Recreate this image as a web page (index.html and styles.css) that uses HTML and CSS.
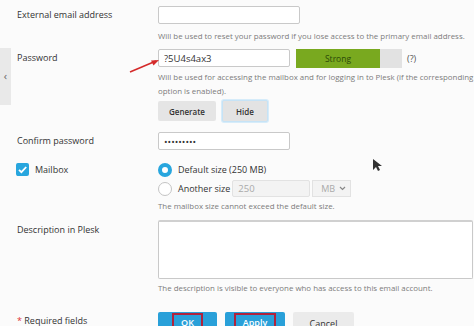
FILE: index.html
```html
<!DOCTYPE html>
<html lang="en">
<head>
  <meta charset="UTF-8">
  <title>Create Email Address</title>
  <link rel="stylesheet" href="styles.css">
</head>
<body>
  <div class="side-tab">&lsaquo;</div>

  <form class="form">
    <div class="row row-email">
      <div class="label">External email address</div>
      <div class="field">
        <input type="text" class="text wide">
        <div class="hint">Will be used to reset your password if you lose access to the primary email address.</div>
      </div>
    </div>

    <div class="row row-password">
      <div class="label">Password</div>
      <div class="field">
        <div class="inline">
          <input type="text" class="text" value="?5U4s4ax3">
          <div class="strength"><div class="strength-fill">Strong</div></div>
          <span class="help-mark">(?)</span>
        </div>
        <div class="hint">Will be used for accessing the mailbox and for logging in to Plesk (if the corresponding option is enabled).</div>
        <div class="inline buttons-small">
          <button type="button" class="btn">Generate</button>
          <button type="button" class="btn focused">Hide</button>
        </div>
      </div>
    </div>

    <div class="row row-confirm">
      <div class="label">Confirm password</div>
      <div class="field">
        <input type="password" class="text" value="*********">
      </div>
    </div>

    <div class="row row-mailbox">
      <div class="label"><span class="checkbox"><svg width="13" height="13" viewBox="0 0 13 13"><path d="M3 6.8l2.4 2.4L10.2 4" fill="none" stroke="#fff" stroke-width="1.8"/></svg></span>Mailbox</div>
      <div class="field">
        <label class="radio-line"><span class="radio checked"></span>Default size (250 MB)</label>
        <label class="radio-line"><span class="radio"></span>Another size
          <input type="text" class="text small" value="250" disabled>
          <span class="select">MB <svg width="7" height="5" viewBox="0 0 7 5"><path d="M1 1l2.5 2.5L6 1" fill="none" stroke="#888" stroke-width="1.2"/></svg></span>
        </label>
        <div class="hint">The mailbox size cannot exceed the default size.</div>
      </div>
    </div>

    <div class="row row-description">
      <div class="label">Description in Plesk</div>
      <div class="field">
        <textarea class="area"></textarea>
        <div class="hint">The description is visible to everyone who has access to this email account.</div>
      </div>
    </div>

    <div class="row row-actions">
      <div class="label"><span class="req">*</span> Required fields</div>
      <div class="field inline actions">
        <button type="button" class="btn primary ok"><span class="mark">OK</span></button>
        <button type="button" class="btn primary apply"><span class="mark">Apply</span></button>
        <button type="button" class="btn cancel">Cancel</button>
      </div>
    </div>
  </form>

  <!-- annotation arrow -->
  <svg class="arrow" width="34" height="18" viewBox="0 0 34 18">
    <path d="M2 15L28 4" stroke="#d42a2a" stroke-width="1.6"/>
    <path d="M31 3l-8 0.5 2.5 5z" fill="#d42a2a"/>
  </svg>

  <!-- mouse pointer -->
  <svg class="pointer" width="10" height="14" viewBox="0 0 10 14">
    <path d="M1 1v11l3-3 2 4 2-1-2-4h4z" fill="#333"/>
  </svg>
</body>
</html>
```

FILE: styles.css
```css
body {
  margin: 0;
  background-color: #fbfbfb;
  font-family: "Open Sans", Arial, sans-serif;
  font-size: 9px;
  color: #333;
  overflow: hidden;
}

.side-tab {
  position: absolute;
  left: 0;
  top: 48px;
  width: 11px;
  height: 57px;
  background-color: #e9e9e9;
  color: #666;
  font-size: 11px;
  line-height: 55px;
  text-align: center;
}

.form {
  padding: 6px 0 0 17px;
}

.row {
  display: grid;
  grid-template-columns: 141px 1fr;
}

.label {
  padding-top: 3px;
  line-height: 12px;
  white-space: nowrap;
}

.field {
  min-width: 0;
}

.inline {
  display: flex;
  align-items: flex-start;
}

.text {
  box-sizing: border-box;
  display: block;
  width: 132px;
  height: 18px;
  margin: 0;
  padding: 0 5px;
  border: 1px solid #c9c9c9;
  border-radius: 2px;
  background-color: #fff;
  font-family: inherit;
  font-size: 9.5px;
  color: #333;
}

.text.wide {
  width: 142px;
}

.hint {
  color: #7c7c7c;
  font-size: 7.9px;
  line-height: 14px;
  white-space: nowrap;
}

.row-email .hint {
  margin-top: 5px;
}

.row-password {
  margin-top: 6px;
}

.row-password .hint {
  margin-top: 2px;
  white-space: normal;
  width: 316px;
}

.strength {
  width: 106px;
  height: 19px;
  margin-left: 6px;
  background-color: #e2e2e2;
}

.strength-fill {
  width: 84px;
  height: 100%;
  background-color: #79a91f;
  color: #2c4a08;
  font-size: 8.5px;
  line-height: 19px;
  text-align: center;
}

.help-mark {
  margin-left: 5px;
  line-height: 19px;
  color: #555;
}

.buttons-small {
  margin-top: 3px;
  gap: 6px;
}

.btn {
  height: 20px;
  padding: 0 10px;
  border: 1px solid transparent;
  border-radius: 2px;
  background-color: #e5e5e5;
  font-family: inherit;
  font-size: 8px;
  font-weight: 600;
  color: #333;
}

.btn.focused {
  width: 46px;
  margin-top: -1px;
  height: 22px;
  border-color: #c6e3f6;
  box-shadow: 0 0 0 1px #d6ecfa;
  background-color: #e3e3e3;
}

.row-confirm {
  margin-top: 10px;
}

.row-mailbox {
  margin-top: 10px;
}

.row-mailbox .label {
  display: flex;
  align-items: center;
  height: 19px;
  padding-top: 0;
}

.checkbox {
  width: 13px;
  height: 13px;
  margin-left: -1px;
  margin-right: 6px;
  border-radius: 2px;
  background-color: #28a6de;
}

.checkbox svg {
  display: block;
}

.radio-line {
  display: flex;
  align-items: center;
  height: 19px;
  white-space: nowrap;
}

.radio {
  box-sizing: border-box;
  width: 14px;
  height: 14px;
  margin-right: 6px;
  border: 1px solid #c4c4c4;
  border-radius: 50%;
  background-color: #fff;
}

.radio.checked {
  border: 4px solid #28a6de;
}

.text.small {
  width: 78px;
  height: 17px;
  margin-left: 2px;
  border-color: #e2e2e2;
  background-color: #f3f3f3;
  color: #aaa;
}

.select {
  box-sizing: border-box;
  display: flex;
  align-items: center;
  justify-content: space-between;
  width: 39px;
  height: 17px;
  margin-left: 2px;
  padding: 0 4px 0 8px;
  border: 1px solid #e2e2e2;
  background-color: #f3f3f3;
  color: #aaa;
}

.row-mailbox .hint {
  margin-top: 1px;
}

.row-description {
  margin-top: 7px;
}

.row-description .label {
  padding-top: 4px;
}

.area {
  box-sizing: border-box;
  display: block;
  width: 315px;
  height: 59px;
  margin: 0;
  border: 1px solid #c9c9c9;
  border-top: 2px solid #d0d0d0;
  border-radius: 2px;
  background-color: #fff;
  resize: none;
}

.row-description .hint {
  margin-top: 2px;
}

.row-actions {
  margin-top: 17px;
}

.req {
  color: #d33;
}

.actions {
  gap: 8px;
}

.actions .btn {
  height: 22px;
  padding: 0;
  font-size: 9px;
}

.btn.primary {
  background-color: #29a0d9;
  color: #fff;
}

.btn.ok {
  width: 59px;
}

.btn.apply {
  width: 60px;
}

.btn.cancel {
  width: 61px;
  font-weight: 400;
  background-color: #ebebeb;
}

.mark {
  display: inline-block;
  padding: 1px 7px 3px;
  border: 2px solid #b0223c;
}

.arrow {
  position: absolute;
  left: 128px;
  top: 57px;
}

.pointer {
  position: absolute;
  left: 372px;
  top: 158px;
}
```
